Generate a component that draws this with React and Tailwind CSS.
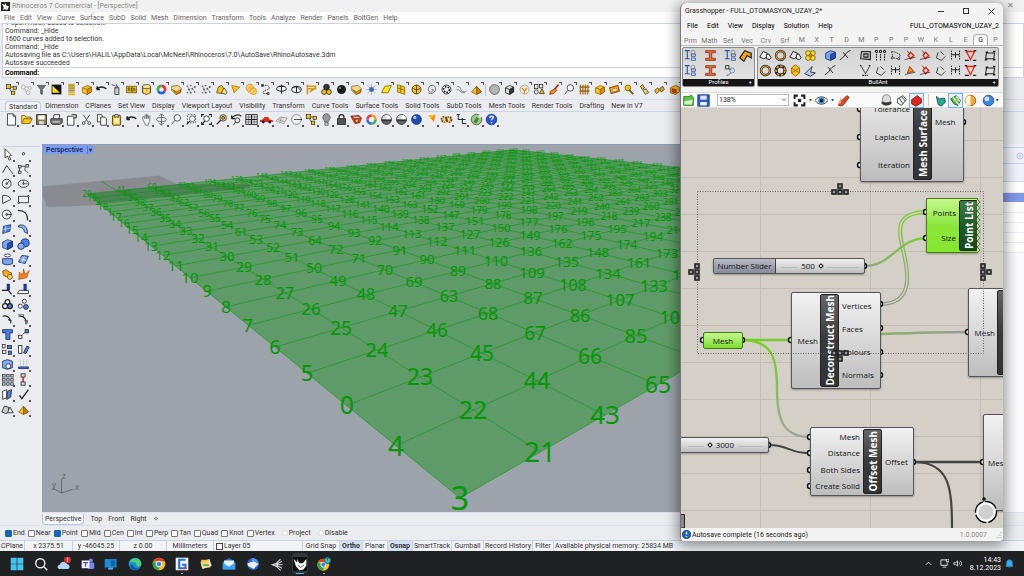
import { useState } from "react";

const Y = "#f6c21c";
const B = "#4d7fdc";
const K = "#222";

// Small drawings shared by all the toolbars, every one on a 16 x 16 board
const GLYPHS = {
    nodes: <g stroke={K} strokeWidth=".8"><path d="M5 5h6M5 6l4 7" fill="none" /><rect x="2" y="2" width="5" height="5" fill={Y} /><rect x="10" y="4" width="4" height="4" fill={Y} /><rect x="8" y="10" width="4" height="4" fill={Y} /></g>,
    nodesGrey: <g stroke="#aaa" strokeWidth="1"><path d="M5 5h6M5 6l4 7" fill="none" /><circle cx="4" cy="5" r="2.5" fill="#eee" /><circle cx="12" cy="6" r="2" fill="#eee" /><circle cx="10" cy="12" r="2.5" fill="#eee" /></g>,
    filter: <path d="M3 3h10l-4 5v6l-2-1V8z" fill="#777" stroke="#333" strokeWidth=".8" />,
    contrast: <g><rect x="2" y="2" width="12" height="12" fill="#111" /><path d="M3 13V4l9 9z" fill="#ffe21f" transform="translate(0 -1)" /></g>,
    list: <g><path d="M4 2h8M4 5h8M4 8h8M4 11h8M4 14h8" stroke="#e0b21b" strokeWidth="2" /><path d="M4 3.500h8M4 6.500h8M4 9.500h8" stroke="#555" strokeWidth=".8" /></g>,
    box: <g stroke="#7c5600" strokeWidth=".8"><path d="M3 6l6-3 5 2v6l-5 3-6-2z" fill={Y} /><path d="M3 6l6 2 5-3M9 8v6" fill="none" /><path d="M9 8l5-3v6l-5 3z" fill="#e08e12" /></g>,
    cyl: <g stroke={K} strokeWidth=".9"><path d="M3 5v7l5 2 5-2V5z" fill={Y} /><ellipse cx="8" cy="4.500" rx="5" ry="2.500" fill="#ffe98a" /><path d="M6 7v6M10 7v6" stroke="#fff" /></g>,
    arc: <path d="M2 8c3-4 8-4 12-1M2 8l1-4M2 8l4 0" fill="none" stroke={K} strokeWidth="1.700" />,
    spray: <g stroke={K} strokeWidth=".9"><rect x="6" y="6" width="5" height="8" fill="#ccc" /><path d="M7 6l1-4 2 4M2 2l4 1" fill="none" /></g>,
    tag: <g><rect x="2" y="4" width="12" height="8" fill={Y} stroke="#6d5200" /><path d="M4 10V6h2v4M8 6v4h2V6zM12 6v4" stroke={K} fill="none" strokeWidth=".8" /></g>,
    wheel: <g fill="none" strokeWidth="3.500"><path d="M8 3.500a4.500 4.500 0 0 1 4 6.500" stroke="#e33" /><path d="M12 10a4.500 4.500 0 0 1-8 0" stroke="#2c62e0" /><path d="M4 10a4.500 4.500 0 0 1 4-6.500" stroke="#36b54a" /></g>,
    slab: <g stroke="#6d4a00" strokeWidth=".8"><path d="M2 4l8-1 4 4-1 5-6 2-5-5z" fill="#f2d98c" /><path d="M3 8l5 3 5-3v3l-5 3z" fill="#f08a1a" /></g>,
    speck: <g fill="#555"><circle cx="3" cy="4" r="1" /><circle cx="7" cy="3" r="1" /><circle cx="12" cy="5" r="1.200" /><circle cx="5" cy="8" r="1.200" /><circle cx="9" cy="7" r="1.200" /><circle cx="12" cy="11" r="1" /><circle cx="7" cy="12" r="1.200" /><circle cx="3" cy="12" r="1" /><path d="M3 4l4 8M9 7l3 4" stroke="#777" strokeWidth=".7" /></g>,
    shapes: <g stroke={K} strokeWidth=".8"><path d="M2 12l2-7 4-2 3 4-2 6z" fill={Y} /><path d="M8 12l3-6 4 5-2 3z" fill="#f0e090" /></g>,
    fan: <path d="M2 3l10 2-7 7z" fill={Y} stroke="#8a6a10" strokeWidth=".8" />,
    hatch: <g stroke="#e5a423" strokeWidth="1.300" fill="none"><circle cx="6" cy="6" r="4.500" fill="#fbd98b" /><circle cx="10" cy="10" r="4" fill="#fbd98b" /><path d="M3 8l5-5M4 12l7-7M8 13l5-5" /></g>,
    curve: <g fill="none" stroke={K} strokeWidth="1"><path d="M3 3c8-1 9 2 8 4S2 9 4 13l5 0" strokeDasharray="2 1" /><rect x="2" y="2" width="2" height="2" fill="#fff" /><rect x="9" y="12" width="2" height="2" fill="#fff" /></g>,
    loop: <g fill="none" stroke={K} strokeWidth="1.200"><ellipse cx="8" cy="7" rx="6" ry="3" /><path d="M8 2v11M5 4h6" /></g>,
    loop2: <g fill="none" stroke={K} strokeWidth="1.200"><ellipse cx="8" cy="8" rx="6" ry="4" /><path d="M3 6c5-3 8 0 10 3M8 4v8" /></g>,
    plane: <path d="M3 2v12M3 4h10v3H3M6 11l7-5" fill="none" stroke="#d79a12" strokeWidth="2" />,
    balls: <g stroke={K}><circle cx="8" cy="5" r="3.500" fill="#333" /><circle cx="5" cy="11" r="3" fill={Y} /><circle cx="11" cy="11" r="3" fill={Y} /></g>,
    ballDark: <g><circle cx="8" cy="8" r="5.500" fill="#1a1a1a" /><circle cx="6" cy="6" r="1.500" fill="#777" /></g>,
    burst: <g><path d="M8 1v14M1 8h14M3 3l10 10M13 3L3 13" stroke="#9db7dd" strokeWidth="1" /><circle cx="8" cy="8" r="3" fill="#3767b5" /></g>,
    sheet: <path d="M2 12l4-8 8-1-4 9z" fill="#ffe21f" stroke="#7a6500" strokeWidth="1" />,
    panel: <g stroke="#7a6500" strokeWidth=".9"><path d="M3 2l9 3v9l-9-3z" fill={Y} /><path d="M3 6l9 3M7 3v9" fill="none" /></g>,
    gold: <g stroke={K} strokeWidth=".9"><circle cx="8" cy="8" r="5.500" fill={Y} /><path d="M3 6c4 3 7 3 10 0M8 3v10" fill="none" /></g>,
    spiral: <path d="M8 8c2-2 3 2 0 3S3 9 5 5s9-2 8 3-6 6-9 4" fill="none" stroke="#555" strokeWidth="1" />,
    gear: <g fill="none" stroke={K}><circle cx="8" cy="8" r="5.500" strokeWidth="1" /><circle cx="8" cy="8" r="3.500" strokeDasharray="2 1.500" strokeWidth="2" /></g>,
    squiggle: <path d="M2 5c3-2 5 1 5 3s4 4 7 2M2 8c4 0 5 5 10 4" fill="none" stroke="#666" />,
    pyramid: <g stroke="#6d4a00" strokeWidth=".8"><path d="M2 11l6-7 6 7-6 3z" fill={Y} /><path d="M8 4v10l6-3z" fill="#c77d12" /></g>,
    ballGrey: <circle cx="8" cy="8" r="6" fill="#b5b5b5" stroke="#555" />,
    cube: <g stroke={K}><path d="M3 6l5-3 5 2v6l-5 3-5-2z" fill="#ddd" /><path d="M8 8l5-3v6l-5 3z" fill="#333" /><path d="M3 6l5 2" /></g>,
    knot: <g stroke="#999"><circle cx="8" cy="8" r="5.500" fill="#f3ead0" /><path d="M5 6l3 4 3-4M8 10v3" stroke="#d08a16" strokeWidth="1.500" fill="none" /></g>,
    digits: <g stroke={K} strokeWidth=".9" fill="#eee"><rect x="2" y="2" width="4" height="5" /><rect x="8" y="2" width="4" height="4" /><circle cx="4" cy="11" r="2.500" /><path d="M8 13l3-6 3 6z" fill={Y} /></g>,
    brush: <g><path d="M13 2L8 8" stroke="#a02a1a" strokeWidth="2" /><path d="M9 7l-6 3-1 4 5-1 4-4z" fill="#f08a1a" stroke="#6d2a00" strokeWidth=".8" /></g>,
    lens: <g fill="#f5f5f5" stroke="#555" strokeWidth="1.200"><path d="M6 9l-4 5" /><circle cx="9" cy="6" r="4" /></g>,
    fence: <g stroke="#6b4309" strokeWidth="1"><path d="M2 5h12M2 10h12" strokeWidth="1.500" /><path d="M3 2v12M6 2v12M9 2v12M12 2v12" stroke="#b06c10" strokeWidth="1.600" /></g>,
    frame: <g stroke="#a14b08"><path d="M2 6l10-3 2 7-10 3z" fill={Y} strokeWidth="1.500" /><path d="M5 8l5-2 2 3-5 2z" fill="#eee" strokeWidth=".8" /></g>,
    key: <g stroke="#5c4300" strokeWidth=".8"><circle cx="6" cy="6" r="3.500" fill={Y} /><path d="M8 8l5 5-1 1-5-5z" fill="#8b6a10" /></g>,
    bolt: <g stroke={K} strokeWidth=".8"><path d="M3 4l3-2 2 4-3 2z" fill={Y} /><path d="M6 9l4-2 3 5-4 2z" fill="#e3cf70" /></g>,
    bolts: <g stroke={K} strokeWidth=".8"><path d="M2 9l4-3 2 4-4 3z" fill={Y} /><path d="M8 7l4-3 2 4-4 3z" fill="#e0a020" /></g>,
    redBox: <g stroke="#7a3b00" strokeWidth=".9"><path d="M3 6l6-3 5 2v6l-5 3-6-2z" fill={Y} /><path d="M5 7l5 1v4l-5-1z" fill="#e03a1a" /></g>,
    page: <path d="M3 1h7l3 3v11H3zM10 1v3h3" fill="#fff" stroke={K} strokeWidth="1" />,
    folder: <g stroke="#6b4d05" strokeWidth=".9"><path d="M2 12V3h4l1 2h6v2" fill="#ffd95e" /><path d="M2 13l3-6h10l-3 6z" fill={Y} /></g>,
    disk: <g><rect x="2" y="2" width="12" height="12" fill="#8a8046" stroke={K} /><rect x="4" y="3" width="8" height="5" fill="#fff" /><rect x="5" y="10" width="6" height="4" fill="#d5d5d5" /></g>,
    printer: <g stroke={K}><path d="M4 7l1-5h7l-1 5" fill="#fff" /><path d="M1 7h14v5l-3 2H3l-2-2z" fill="#777" /><path d="M3 11h9" stroke="#fff" /></g>,
    props: <g stroke={K}><path d="M3 4h8v11H3z" fill="#fff" /><path d="M8 2h6v4h-4" fill="#bbb" /></g>,
    cut: <g fill="none" stroke="#444" strokeWidth="1.100"><path d="M4 2l6 9M12 2l-6 9" /><circle cx="4.500" cy="12.500" r="1.700" /><circle cx="11.500" cy="12.500" r="1.700" /></g>,
    copy: <g fill="#fff" stroke={K}><path d="M3 2h5l1 2v7H3z" /><path d="M7 5h5l2 2v8H7z" /></g>,
    paste: <g stroke={K} strokeWidth=".9"><rect x="3" y="3" width="10" height="12" rx="1" fill={Y} /><path d="M5 5h6l-1-3H6z" fill="#ddd" /><rect x="5" y="6" width="6" height="7" fill="#fff0b8" stroke="none" /></g>,
    hand: <path d="M4 9L3 5l1-1 2 3V3l1-1 1 5 0-5 1 0 1 5 1-4 1 1v5l-2 6H7z" fill="#fff" stroke="#555" strokeWidth=".9" />,
    orbit: <g fill="none" stroke="#555"><path d="M8 1v14M5 4l3-3 3 3M5 12l3 3 3-3" /><ellipse cx="8" cy="8" rx="6" ry="2.500" /></g>,
    zoomSel: <g fill="none" stroke={K}><path d="M3 12V2h10v10z" strokeDasharray="2 1.500" strokeWidth=".8" /><circle cx="9" cy="7" r="3.500" fill="#f6f6f6" stroke="#555" /><path d="M6 10l-4 4" strokeWidth="1.500" /></g>,
    zoomExt: <g fill="none" stroke={K}><path d="M2 5V2h3M11 2h3v3M14 11v3h-3M5 14H2v-3" strokeWidth="1.300" /><circle cx="8" cy="7" r="3.500" fill="#f6f6f6" /><path d="M6 10l-3 3" strokeWidth="1.500" /></g>,
    zoomY: <g stroke={K}><circle cx="10" cy="6" r="4" fill="#ffe9a0" /><circle cx="10" cy="6" r="1.800" fill={Y} /><path d="M7 9l-5 5" strokeWidth="1.600" /></g>,
    undoView: <g fill="none" stroke={K}><path d="M2 7c2-5 9-6 12-3M2 7l0-4M2 7h4" strokeWidth="1.500" /><circle cx="9" cy="9" r="3" /><path d="M7 11l-3 4" /></g>,
    grid4: <g fill="#ddd" stroke={K} strokeWidth="1"><rect x="1" y="2" width="14" height="12" /><path d="M8 2v12M1 8h14" strokeWidth="1.500" /><path d="M4.500 2v12M11.500 2v12M1 5h14M1 11h14" strokeWidth=".5" /></g>,
    car: <g><path d="M0 9l3-1 3-3h4l2 3 4 1v2H0z" fill="#e02a1f" /><circle cx="4" cy="11" r="1.800" fill={K} /><circle cx="12" cy="11" r="1.800" fill={K} /></g>,
    mesh: <g stroke="#888" fill="#ddd" strokeWidth=".8"><path d="M1 10l5-5 9 1-4 7z" /><path d="M4 8l8 3M8 5l-2 7" /></g>,
    dial: <g fill="#f2f2f2" stroke="#777"><circle cx="8" cy="8" r="6" /><path d="M8 8h7M8 8h-3" stroke={K} /></g>,
    bulb: <g stroke="#555"><path d="M5 9C1 4 6 1 8 1s7 3 3 8l-1 2H6z" fill="#9a9a9a" /><path d="M6 12h4v3H6z" fill="#ddd" /></g>,
    lock: <g stroke={K}><path d="M5 8V5c0-4 6-4 6 0v3" fill="none" strokeWidth="1.500" /><rect x="3" y="7" width="10" height="7" fill="#555" /></g>,
    shade: <g stroke="#6b1b10" strokeWidth=".8"><path d="M1 4l10-1 3 3-2 6-6 1z" fill="#e23a2a" /><path d="M2 4l9 0 2 2-7 1z" fill="#f6d7b0" /><path d="M6 8l5-1-1 4-3 1z" fill={Y} /></g>,
    ring: <g fill="none" strokeWidth="3"><path d="M8 3a5 5 0 0 1 5 5" stroke="#f5a11a" /><path d="M13 8a5 5 0 0 1-5 5" stroke="#2db24a" /><path d="M8 13a5 5 0 0 1-5-5" stroke="#2c62e0" /><path d="M3 8a5 5 0 0 1 5-5" stroke="#e3333a" /></g>,
    ballHalf: <g><circle cx="8" cy="8" r="6" fill="#666" stroke={K} /><path d="M2.500 8a5.500 5.500 0 0 1 11 0z" fill="#ddd" /><path d="M8 2v6h5.500A6 6 0 0 0 8 2z" fill="#fff" /><path d="M2 8h12v2H2z" fill="#333" /></g>,
    ballBlue: <g><circle cx="8" cy="8" r="6" fill="#1f4fae" stroke="#12265a" /><circle cx="6" cy="5.500" r="2" fill="#a9c6ff" /></g>,
    cone: <g><path d="M4 3l9-1-2 9z" fill="#f08a1a" /><path d="M4 3l9-1-5 4z" fill={Y} /></g>,
    gears: <g fill="none" stroke="#6b3e10"><circle cx="5" cy="8" r="3" strokeWidth="2.500" strokeDasharray="2 1" /><circle cx="11" cy="8" r="3" strokeWidth="2.500" strokeDasharray="2 1" /><circle cx="8" cy="8" r="4" stroke={Y} /></g>,
    steps: <path d="M2 2h4M4 2v6h5M9 6v7h5M9 8h4" fill="none" stroke={K} strokeWidth="1.200" />,
    hopper: <g><circle cx="8" cy="8" r="6.500" fill="#9acb86" stroke="#4c4c4c" /><path d="M4 11l4-6 3 2-3 6z" fill="#4e7f3e" /><circle cx="12" cy="4" r="2" fill="#d8ead0" /></g>,
    help: <g><circle cx="8" cy="8" r="6.500" fill="#2c55c8" stroke="#17317e" /><path d="M6 6c0-3 5-3 4 0-1 1-2 1-2 3M8 11v1.500" stroke="#fff" strokeWidth="1.600" fill="none" /></g>,
    // modelling palette on the left
    cursor: <path d="M5 1v11l3-2 2 5 2-1-2-4 3-1z" fill="#fff" stroke={K} />,
    point: <circle cx="8" cy="7" r="1.500" fill="#fff" stroke={K} />,
    polyline: <path d="M2 12L7 3l8 11" fill="none" stroke={K} />,
    ctrlPts: <g fill="#fff" stroke={K} strokeWidth=".9"><path d="M3 12V4h8c-4 6 2 7 3 8" fill="none" /><rect x="2" y="10" width="3" height="3" /><rect x="2" y="3" width="3" height="3" /><rect x="11" y="2" width="3" height="3" /></g>,
    circle: <g fill="none" stroke={K}><circle cx="7" cy="7" r="5.500" /><path d="M7 7l4-4" /><circle cx="7" cy="7" r="1" /></g>,
    ellipse: <g fill="none" stroke={K}><ellipse cx="8" cy="7" rx="6.500" ry="4.500" /><path d="M8 7h6M8 3v4" strokeWidth=".7" /><circle cx="8" cy="7" r="1" /></g>,
    arcTool: <path d="M2 3h4c4 1 6 4 6 5L2 13z" fill="none" stroke={K} />,
    rect: <g fill="none" stroke={K}><rect x="2" y="4" width="12" height="8" /><circle cx="2" cy="12" r="1" fill="#fff" /><circle cx="14" cy="4" r="1" fill="#fff" /></g>,
    polygon: <g fill="none" stroke={K}><circle cx="7" cy="8" r="5.500" /><circle cx="7" cy="8" r="1.200" /><path d="M7 8h6" /></g>,
    blend: <path d="M1 3c7 0 12 2 12 12" fill="none" stroke={K} strokeWidth="1.600" />,
    surface: <g stroke="#1a2f66" strokeWidth=".9"><path d="M3 4l9-2-1 8-9 3z" fill={B} /><path d="M6 3l-1 9M3 8l9-2" stroke="#fff" strokeWidth=".7" /></g>,
    sweep: <path d="M2 3c6-2 11 1 11 10l-4-2c0-4-3-6-7-6z" fill="#8eb1f0" stroke="#1a2f66" />,
    boxBlue: <g stroke="#14285c" strokeWidth=".9"><path d="M2 5l6-3 6 2v7l-6 3-6-2z" fill="#7da5ef" /><path d="M8 7l6-3v7l-6 3z" fill="#2552ae" /></g>,
    spheres: <g stroke="#14285c"><circle cx="10" cy="6" r="5" fill={B} /><circle cx="5" cy="10" r="4" fill="#86abef" /></g>,
    cylBlue: <g stroke="#14285c"><ellipse cx="8" cy="3" rx="4" ry="1.800" fill="#fff" /><path d="M2 7h12v6c-3 2-9 2-12 0z" fill="#7da5ef" /></g>,
    sheetBlue: <g stroke="#14285c"><path d="M2 11l4-8 8 1-4 9z" fill="#7da5ef" /><path d="M4 7l8 2M9 4l-3 8" stroke="#fff" strokeWidth=".8" /></g>,
    puzzle: <g stroke="#6b4309"><path d="M2 4l4-2 4 3 3 1-1 4-5 1-4-2z" fill="#f3ab22" /><circle cx="11" cy="11" r="3" fill="#ffd95e" /></g>,
    explode: <path d="M2 14l1-9 4 4 1-8 2 7 5-5-3 9z" fill="#f08a1a" stroke="#9b3b00" strokeWidth=".7" />,
    trim: <g stroke={K}><path d="M1 9h8l4 5" fill="none" strokeWidth="1.400" /><path d="M7 1h4v8H7z" fill="#1d3a8a" stroke="none" /></g>,
    split: <g stroke={K}><path d="M1 12l2-3h11v4H1z" fill="#fff" /><path d="M8 1h4v9H8z" fill="#1d3a8a" stroke="none" /></g>,
    group: <g stroke={K} strokeWidth="1.500"><circle cx="8" cy="5" r="3" fill="#fff" /><circle cx="5" cy="10" r="3" fill="#fff" /><circle cx="11" cy="10" r="3" fill={B} /></g>,
    ungroup: <g stroke={K}><circle cx="9" cy="4" r="2.500" fill="#fff" /><circle cx="4" cy="10" r="2.500" fill="#fff" /><circle cx="11" cy="11" r="3" fill={B} /></g>,
    edit1: <path d="M2 4c7-2 11 4 10 9M9 8l4 2" fill="none" stroke={K} strokeWidth="1.400" />,
    edit2: <g fill="none" stroke={K}><path d="M2 4c7-1 10 4 9 10" strokeWidth="1.400" /><path d="M1 2h7v3M9 9h4v4" strokeWidth=".7" /></g>,
    text: <path d="M2 2h12v4h-3v8H6V6H2z" fill={B} stroke="#14285c" />,
    move: <g stroke={K}><rect x="2" y="9" width="4" height="4" fill="#fff" /><path d="M7 8l3-3" /><rect x="10" y="2" width="4" height="4" fill={B} /></g>,
    align: <g stroke={K} strokeWidth=".9"><rect x="2" y="2" width="3" height="4" fill="#fff" /><rect x="8" y="3" width="5" height="4" fill={B} /><rect x="2" y="9" width="4" height="4" fill="#fff" /><rect x="9" y="10" width="4" height="4" fill={B} /></g>,
    rotate: <g stroke={K}><rect x="2" y="3" width="4" height="10" fill="#fff" /><path d="M8 12l4-8 3 1-4 8z" fill={B} /></g>,
    solid: <g stroke="#14285c"><path d="M2 4l6-2 6 2v8l-6 2-6-2z" fill="#86abef" /><circle cx="9" cy="10" r="3" fill="#fff" /></g>,
    project: <g stroke="#8aa"><path d="M4 2v7M8 2v7M12 2v7" strokeDasharray="1 1" /><path d="M2 11h12v2H2z" fill={B} stroke="#14285c" /></g>,
    array: <g fill="#c7d7f7" stroke={K} strokeWidth=".9"><rect x="2" y="2" width="3" height="3" /><rect x="7" y="2" width="3" height="3" /><rect x="12" y="2" width="3" height="3" /><rect x="2" y="7" width="3" height="3" /><rect x="7" y="7" width="3" height="3" /><rect x="12" y="7" width="3" height="3" /><rect x="2" y="12" width="3" height="3" /><rect x="7" y="12" width="3" height="3" /><rect x="12" y="12" width="3" height="3" /></g>,
    dim: <g stroke={K} fill="#ddd"><rect x="5" y="1" width="5" height="4" /><rect x="5" y="11" width="5" height="4" /><path d="M7.500 5v6" stroke="#d22" strokeWidth="2" /></g>,
    check: <path d="M3 9l3 4L14 2" fill="none" stroke={K} strokeWidth="1.700" />,
    twist: <g stroke={K}><path d="M2 4l5-2v10l-5 2z" fill="#fff" /><path d="M8 4l5-2-1 9-5 3z" fill={B} /></g>,
    solids: <g stroke={K}><path d="M1 11l3-7 5 1 1 6-4 2z" fill="#ccc" /><path d="M8 12l3-7 4 7z" fill="#eee" /></g>,
    // grasshopper ribbon
    beamBlue: <g fill="none" stroke="#2856a8" strokeWidth="1.400"><path d="M1 2h6M4 2v10M1 12h6" /><path d="M9 6h5v3H9zM9 11h5v3H9z" strokeWidth="1" /><circle cx="11" cy="4" r="2.500" stroke="#777" strokeWidth=".8" /></g>,
    beamRed: <path d="M2 2h12v2.500H9.500v7H14V14H2v-2.500h4.500v-7H2z" fill="#ee6a3a" stroke="#7c2a10" strokeWidth=".9" />,
    chip: <g stroke={K} fill="none"><rect x="2" y="2" width="4" height="4" /><circle cx="10" cy="8" r="3" stroke={B} /><path d="M6 6l3 1M3 14c3 0 4-1 5-3" strokeWidth=".7" /></g>,
    flame: <path d="M1 11l6-9 8 3v6l-5-3-4 7z" fill="#f5a11a" stroke={K} strokeWidth="1.500" />,
    rock: <g fill="#eee" stroke={K} strokeWidth="1.200"><path d="M1 10l4-7 5 2 1 4-5 3z" /><path d="M9 7l3-1 3 5-2 2-4-1z" /></g>,
    torus: <g fill="none"><circle cx="8" cy="8" r="5.500" stroke={K} strokeWidth="3" /><circle cx="8" cy="8" r="5.500" stroke="#e9a23b" strokeWidth="1.400" /></g>,
    torusHex: <g fill="none"><circle cx="8" cy="8" r="5.500" stroke={K} strokeWidth="4" /><circle cx="8" cy="8" r="5.500" stroke="#e9a23b" strokeWidth="2" strokeDasharray="3 2" /></g>,
    flower: <g fill="#ffe21f" stroke="#7a5600"><circle cx="5" cy="5" r="3" /><circle cx="11" cy="5" r="3" /><circle cx="5" cy="11" r="3" /><circle cx="11" cy="11" r="3" /><circle cx="8" cy="8" r="2" fill="#f08a1a" /></g>,
    egg: <path d="M8 1l5 4v6l-5 4-5-4V5zM3 5l10 6M13 5L3 11" fill={Y} stroke="#9b5b00" />,
    sail: <path d="M1 12l9-9-2 7 6 1-6 4z" fill="#b9cdf3" stroke={K} />,
    slope: <path d="M1 13C6 12 8 3 14 2M5 4l6 7" fill="none" stroke={K} strokeWidth="1.200" />,
    quad: <path d="M3 3h11v10l-12-1zM6 6l5 0 0 4-5 0z" fill="#bbb" stroke={K} strokeWidth="1.300" />,
    bars: <g stroke={K} strokeWidth="1.300" fill="#fff"><path d="M3 3v11M8 3v11M13 3v11" strokeDasharray="2 1" /><circle cx="3" cy="3" r="1.300" /><circle cx="8" cy="3" r="1.300" /><circle cx="13" cy="3" r="1.300" /></g>,
    ptsPath: <g stroke={K} fill="#fff"><path d="M3 3l2 8 7 1 2-5-6-3z" fill="none" strokeDasharray="2 1" /><circle cx="4" cy="11" r="1.300" /><circle cx="12" cy="12" r="1.300" /></g>,
    redNode: <g fill="none" stroke="#e02a1f" strokeWidth="1.800"><path d="M8 4l4 4-4 4-3-4z" /><path d="M1 13l13-3M4 2l3 4" stroke={K} strokeWidth=".9" /></g>,
    yellowNode: <g><path d="M7 3l5 6-8 2z" fill="#f08a1a" stroke="#9b3b00" /><path d="M1 13l13-3" stroke={K} strokeWidth=".9" /></g>,
    hex: <path d="M5 4l-2 7 6 3 5-5M8 3l4 4" fill="none" stroke={K} />,
    ladder: <g stroke={K} strokeWidth="1.200" fill="none"><path d="M3 2v12M13 2v12" strokeDasharray="2 1" /><path d="M3 7h10M8 4v7" /></g>,
    vRed: <g fill="none"><path d="M3 3l5 10 5-10z" stroke="#e02a1f" strokeWidth="1.700" /><path d="M1 2h3M12 2h3M1 14h5M11 14h4" stroke={K} strokeWidth="1.300" /></g>,
    vGrey: <g fill="none" stroke={K}><path d="M3 3l5 9 5-9" /><path d="M1 2h3M12 2h3M4 14h7" strokeWidth="1.500" strokeDasharray="2 1" /></g>,
    road: <g fill="none" stroke={K}><path d="M3 5h10l-1 7H2z" strokeWidth="1.300" /><path d="M2 4h3M11 3h3M1 13h3M11 13h3" strokeWidth="2" /></g>,
};

const Glyph = ({ name, className = "size-[13px]" }) => (
    <svg viewBox="0 0 16 16" className={className} aria-hidden="true">
        {GLYPHS[name]}
    </svg>
);

const ToolButton = ({ name, mark }) => (
    <button type="button" aria-label={name} className="relative flex size-[15px] shrink-0 items-center justify-center">
        <Glyph name={name} />
        {mark === "top" && <span className="absolute top-0 right-0 size-[3px] border-t border-r border-[#555]" />}
        {mark === "bottom" && <span className="absolute right-0 bottom-0 size-[2px] bg-[#555]" />}
    </button>
);

const RHINO_MENU = ["File", "Edit", "View", "Curve", "Surface", "SubD", "Solid", "Mesh", "Dimension", "Transform", "Tools", "Analyze", "Render", "Panels", "BoltGen", "Help"];

const HISTORY = [
    "1 open mesh added to selection.",
    "Command: _Hide",
    "1600 curves added to selection.",
    "Command: _Hide",
    "Autosaving file as C:\\Users\\HALIL\\AppData\\Local\\McNeel\\Rhinoceros\\7.0\\AutoSave\\RhinoAutosave.3dm",
    "Autosave succeeded",
];

const TOP_TOOLS = [
    "nodes", "nodesGrey", "filter", "contrast", "list", "box", "arc", "spray", "tag", "cyl", "wheel", "slab", "speck", "speck", "shapes", "fan",
    "hatch", "curve", "loop", "loop2", "plane", "balls", "ballDark", "slab", "burst", "sheet", "panel", "gold", "spiral", "gear", "squiggle", "pyramid",
];

const TOP_TOOLS_2 = ["ballGrey", "cube", "knot", "digits", "brush", "lens", "fence", "box", "frame", "key", "bolt", "bolts", "redBox"];

const TOOL_TABS = ["Standard", "Dimension", "CPlanes", "Set View", "Display", "Viewport Layout", "Visibility", "Transform", "Curve Tools", "Surface Tools", "Solid Tools", "SubD Tools", "Mesh Tools", "Render Tools", "Drafting", "New in V7"];

const STANDARD_TOOLS = [
    "page", "folder", "disk", "printer", "props", "cut", "copy", "paste", "arc", "hand", "orbit", "lens", "zoomSel", "zoomExt", "zoomY", "undoView",
    "grid4", "car", "mesh", "dial", "nodes", "bulb", "lock", "shade", "ring", "ballHalf", "ballHalf", "ballBlue", "cone", "gears", "steps", "hopper", "help",
];

const SIDE_TOOLS = [
    "cursor", "point", "polyline", "ctrlPts", "circle", "ellipse", "arcTool", "rect", "polygon", "blend", "surface", "sweep",
    "boxBlue", "spheres", "cylBlue", "sheetBlue", "puzzle", "explode", "trim", "split", "group", "ungroup", "edit1", "edit2",
    "text", "move", "align", "rotate", "solid", "project", "array", "dim", "twist", "check", "solids", "pyramid",
];

const SNAPS = ["End", "Near", "Point", "Mid", "Cen", "Int", "Perp", "Tan", "Quad", "Knot", "Vertex"];

const STATUS = [
    { text: "CPlane", width: "w-[25px]" },
    { text: "x 2375.51", width: "w-[48px]" },
    { text: "y -46045.25", width: "w-[47px]" },
    { text: "z 0.00", width: "w-[47px]" },
    { text: "Millimeters", width: "w-[47px]" },
    { text: "Layer 05", width: "w-[89px]", swatch: true },
    { text: "Grid Snap", width: "w-[37px]" },
    { text: "Ortho", width: "w-[23px]", on: true },
    { text: "Planar", width: "w-[25px]" },
    { text: "Osnap", width: "w-[25px]", on: true },
    { text: "SmartTrack", width: "w-[39px]" },
    { text: "Gumball", width: "w-[32px]" },
    { text: "Record History", width: "w-[49px]" },
    { text: "Filter", width: "w-[21px]" },
];

const range = (from, to) => Array.from({ length: to - from + 1 }, (_, k) => from + k);

// Vertex numbers, one list for each row of the mesh
const ROWS = [
    [3, 4, 0, ...range(5, 17), 1, 18, 2, 19, 20],
    range(21, 41),
    [...range(43, 53), 61, 54, 55, 56, 57, 62, 42, 58, 59, 60],
    [65, 66, 67, 68, 63, 69, 70, 71, 72, 64, ...range(73, 83)],
    range(84, 104),
    range(105, 125),
    [...range(131, 136), 126, 127, ...range(137, 141), 128, 129, 130, ...range(142, 146)],
    [158, 159, 160, 161, 148, 162, 149, 150, 151, 147, 152, 163, 153, 154, 155, 156, 164, 157, 165, 166, 167],
    [...range(170, 179), 169, ...range(180, 187), 168, 188],
    [...range(190, 209), 189],
    range(212, 232),
    range(233, 253),
    ...range(0, 8).map((k) => range(254 + k * 21, 274 + k * 21)),
];

// Perspective projection of mesh vertex (i, j) on the viewport
const project = (i, j) => {
    const w = 1 + 0.147 * i + 0.1235 * j;
    return { x: (460 - 5.8 * i + 147.2 * j) / w, y: (498 + 13.3 * i + 9.8 * j) / w, w };
};

const line = (a, b) => `M${a.x.toFixed(1)} ${a.y.toFixed(1)}L${b.x.toFixed(1)} ${b.y.toFixed(1)}`;

const MESH_LINES = range(0, 20)
    .map((k) => line(project(k, 0), project(k, 20)) + line(project(0, k), project(20, k)))
    .join("");

const MESH_OUTLINE = [project(0, 0), project(20, 0), project(20, 20), project(0, 20)].map((p) => `${p.x},${p.y}`).join(" ");

const Viewport = () => (
    <section className="relative min-w-0 flex-1 overflow-hidden border-t border-l border-[#8f9cb5] bg-[#9ca3ab]">
        <svg className="absolute inset-0 size-full font-['Noto_Sans','Open_Sans',sans-serif]">
            <g transform="translate(-43 -145)">
                <polygon points="40,187 160,176 184,188 250,200 47,207" fill="#898b90" />
                <path d="M40 187L160 176l24 12" fill="none" stroke="#85878c" strokeWidth=".6" />
                <polygon points={MESH_OUTLINE} fill="#5f9b68" />
                <polygon points="88,194 180,184 250,184 250,188 100,204" fill="#4d8456" />
                <path d={MESH_LINES} fill="none" stroke="#149419" strokeWidth=".6" />
                <path d="M101 181l16 10" stroke="#149419" strokeWidth=".6" />
                <g fill="#069606" textAnchor="middle">
                    {ROWS.flatMap((row, j) =>
                        row.map((n, i) => {
                            const p = project(i, j);
                            const size = Math.max(5, Math.round(32 / p.w));
                            return (
                                <text key={n + "-" + j} x={Math.round(p.x)} y={Math.round(p.y + size * 0.36)} fontSize={size}>
                                    {n}
                                </text>
                            );
                        })
                    )}
                </g>
                <g fill="none" stroke="#62676d" strokeWidth=".9">
                    <path d="M61.500 493v-14M61.500 493l12-4M61.500 493l-9-5" />
                </g>
                <g fill="#62676d" fontSize="8">
                    <text x="62" y="479">z</text>
                    <text x="52" y="488">y</text>
                    <text x="75" y="490">x</text>
                </g>
            </g>
        </svg>
        <button type="button" className="relative flex h-[9px] items-center gap-1 bg-[#7e9cf3] pr-px pl-[3px] text-[7px] leading-2 font-semibold text-[#1c2c5c]">
            Perspective
            <span className="border-l border-[#5b76c8] pl-px text-[6px]">▾</span>
        </button>
    </section>
);

const LayersPanel = () => (
    <aside className="flex w-[120px] shrink-0 flex-col bg-[#f0f2fa]">
        <div className="h-1 border-b border-[#c8d3ee]" />
        <div className="flex h-4 items-center justify-end border-b border-[#c8d3ee]">
            <svg viewBox="0 0 8 8" className="size-2 text-[#b6c4e6]" aria-hidden="true">
                <circle cx="4" cy="4" r="3" fill="none" stroke="currentColor" />
                <circle cx="4" cy="4" r="1" fill="none" stroke="currentColor" />
            </svg>
        </div>
        <div className="h-[18px] border-b border-[#d3dbef]" />
        <table className="w-full border-collapse bg-white">
            <tbody>
                {range(0, 6).map((r) => (
                    <tr key={r} className={r === 1 ? "h-[10px] bg-[#8297e6]" : "h-[10px] border-b border-[#eceef6]"}>
                        <td className="p-0" />
                    </tr>
                ))}
            </tbody>
        </table>
        <div className="flex-1 bg-[#fbfbfd]" />
    </aside>
);

const SnapBox = ({ label, defaultChecked }) => (
    <label className="flex items-center gap-px">
        <input
            type="checkbox"
            defaultChecked={defaultChecked}
            className="size-[7px] appearance-none rounded-[1px] border border-[#777] bg-white checked:border-[#1765b8] checked:bg-[#1765b8]"
        />
        {label}
    </label>
);

const RhinoWindow = () => {
    const [tab, setTab] = useState("Standard");

    return (
        <div className="flex min-h-0 flex-1 flex-col bg-[#ebecf0] text-[7px] leading-2 text-[#333]">
            <header className="flex h-3 shrink-0 items-center bg-[#f1f1f1] pl-px text-[#8a8a8a]">
                <svg viewBox="0 0 10 10" className="mr-[2px] size-[9px]" aria-hidden="true">
                    <rect width="10" height="10" fill="#222" />
                    <path d="M1 2l3 1 1-2 1 3 3 1-2 4-3-1-2 1 1-3z" fill="#eee" />
                </svg>
                <h1 className="flex-1">Rhinoceros 7 Commercial - [Perspective]</h1>
                <button type="button" aria-label="Close" className="pr-[10px] text-[8px]">✕</button>
            </header>
            <nav className="flex h-[11px] shrink-0 items-center gap-[5px] bg-[#fcfcfc] pl-1 text-[#666]">
                {RHINO_MENU.map((item) => (
                    <button key={item} type="button">{item}</button>
                ))}
            </nav>
            <div className="ml-[2px] flex h-[45px] shrink-0 flex-col justify-end overflow-hidden border border-[#cdd2de] bg-white pl-[2px] text-[#333]">
                {HISTORY.map((entry, k) => (
                    <p key={k} className="shrink-0 whitespace-nowrap">{entry}</p>
                ))}
            </div>
            <label className="ml-[2px] flex h-[10px] shrink-0 items-center border-x border-b border-[#cdd2de] bg-white pl-[2px] font-bold text-black">
                Command:
                <input type="text" className="min-w-0 flex-1 pl-1 font-normal outline-none" />
            </label>
            <div className="flex shrink-0 items-center border-b border-[#dcdfe8] pt-1 pb-[2px] pl-1">
                {TOP_TOOLS.map((name, k) => (
                    <ToolButton key={k} name={name} mark="top" />
                ))}
                <span className="mr-px ml-px h-3 w-px bg-[#bcc2ce]" />
                {TOP_TOOLS_2.map((name, k) => (
                    <ToolButton key={k} name={name} mark="top" />
                ))}
            </div>
            <div className="mt-[2px] flex h-[10px] shrink-0 items-end gap-px border-b border-[#cbd3e6] pl-[5px]" role="tablist">
                {TOOL_TABS.map((name) => (
                    <button
                        key={name}
                        type="button"
                        role="tab"
                        aria-selected={tab === name}
                        onClick={() => setTab(name)}
                        className={tab === name ? "h-[10px] rounded-t-sm border border-b-0 border-[#c3cce2] bg-[#f3f4f8] px-[3px]" : "h-[10px] px-[3px]"}
                    >
                        {name}
                    </button>
                ))}
            </div>
            <div className="flex h-[32px] shrink-0 items-start pl-1">
                {STANDARD_TOOLS.map((name, k) => (
                    <ToolButton key={k} name={name} mark="bottom" />
                ))}
            </div>
            <div className="flex min-h-0 flex-1">
                <div className="w-[42px] shrink-0 pt-[2px]">
                    <div className="mx-[2px] h-px bg-[#cbd3e6]" />
                    <div className="grid w-[31px] grid-cols-2">
                        {SIDE_TOOLS.map((name) => (
                            <ToolButton key={name} name={name} mark="bottom" />
                        ))}
                    </div>
                </div>
                <Viewport />
                <LayersPanel />
            </div>
            <div className="ml-[42px] flex h-[13px] shrink-0 items-center gap-[6px] border-t border-[#dfe3ec]">
                <button type="button" className="h-[11px] rounded-b-sm border border-t-0 border-[#b9c2d8] bg-[#f4f5f9] px-[2px]">Perspective</button>
                <button type="button">Top</button>
                <button type="button">Front</button>
                <button type="button">Right</button>
                <button type="button" aria-label="New viewport">✧</button>
            </div>
            <div className="flex h-[15px] shrink-0 items-center gap-[3px] border-t border-[#dfe3ec] pl-[5px]">
                {SNAPS.map((name) => (
                    <SnapBox key={name} label={name} defaultChecked={name === "End" || name === "Point"} />
                ))}
                {["Project", "Disable"].map((name) => (
                    <label key={name} className="flex items-center gap-px pl-1">
                        <input type="checkbox" className="size-[6px] appearance-none rounded-full border border-[#d5d8e0] bg-white" />
                        {name}
                    </label>
                ))}
            </div>
            <footer className="flex h-[11px] shrink-0 items-stretch border-t border-[#c9d2e4] bg-[#f2f3f7] whitespace-nowrap">
                {STATUS.map(({ text, width, swatch, on }) => (
                    <div
                        key={text}
                        className={`${width} flex shrink-0 items-center border-r border-[#c9d2e4] ${swatch ? "gap-px pl-[2px]" : "justify-center"} ${on ? "bg-[#d3e0f4] font-bold" : ""}`}
                    >
                        {swatch && <span className="size-[7px] border border-[#444] bg-white" />}
                        {text}
                    </div>
                ))}
                <div className="flex items-center pl-px">Available physical memory: 25834 MB</div>
            </footer>
        </div>
    );
};

const GH_TABS_WIDE = ["Prm", "Math", "Set", "Vec", "Crv", "Srf"];
const GH_TABS = ["M", "X", "T", "D", "M", "P", "P", "P", "W", "K", "L", "E", "G", "P"];

const PROFILE_GROUPS = [
    [["beamBlue"], ["beamBlue"]],
    [["beamRed"], ["beamRed"]],
    [["beamBlue", "flame"], ["chip"]],
];

const BULLANT_GROUPS = [
    [["rock", "torus", "rock", "flower"], ["torus", "torusHex", "egg", "sail"]],
    [["boxBlue", "slope"], ["slope"]],
    [["quad", "bars", "ptsPath", "redNode", "redNode", "hex", "ladder", "vRed"], ["vGrey", "hex", "ladder", "yellowNode", "redNode", "hex", "ladder", "vRed"]],
    [["road"], ["road"]],
];

const RibbonPanel = ({ title, groups, className, gap }) => (
    <div className={`flex flex-col overflow-hidden rounded-[2px] border border-[#8a8a8a] bg-linear-to-b from-[#d2d2d2] to-[#e6e6e6] ${className}`}>
        <div className={`flex h-[31px] items-start justify-start ${gap}`}>
            {groups.map((rows, g) => (
                <div key={g} className="flex flex-col">
                    {rows.map((names, r) => (
                        <div key={r} className="flex">
                            {names.map((name, k) => (
                                <ToolButton key={k} name={name} />
                            ))}
                        </div>
                    ))}
                </div>
            ))}
        </div>
        <div className="relative h-[7px] bg-[#151515] text-center text-[6px] leading-[6px] text-white">
            {title}
            <span className="absolute right-[2px]">+</span>
        </div>
    </div>
);

// Nodes of the definition: left, top, size and the free part inside
const NODE = "absolute rounded-[2px] border border-[#555] bg-linear-to-b from-[#f1f1f1] via-[#d8d8d8] to-[#bdbdbd] shadow-[0_1px_2px_rgba(0,0,0,.3)]";

const NodeName = ({ children, green, low }) => (
    <div className={`flex w-[19px] shrink-0 justify-center overflow-hidden rounded-[2px] border border-[#222] text-[10px] leading-4 font-bold text-white ${low ? "items-end pb-[2px]" : "items-center"} ${green ? "bg-linear-to-b from-[#3f7a4a] via-[#1f5a26] to-[#174a1e]" : "bg-linear-to-b from-[#666] via-[#3a3a3a] to-[#333]"}`}>
        <span className="rotate-180 whitespace-nowrap [writing-mode:vertical-rl]">{children}</span>
    </div>
);

const Ports = ({ names, side }) => (
    <div className={`flex flex-1 flex-col justify-around px-[3px] text-[8px] leading-2 ${side === "in" ? "items-end" : "items-start"}`}>
        {names.map((name) => (
            <span key={name}>{name}</span>
        ))}
    </div>
);

const GRIPS = [
    [860, 109], [860, 137], [860, 165], [963, 122], [926, 212], [926, 238], [864, 266],
    [791, 340], [880, 304], [880, 328], [880, 352], [880, 375], [703, 340], [742, 340],
    [968, 332], [768, 445], [810, 437], [810, 453], [810, 470], [810, 486], [913, 462], [983, 462],
];

const SquareCluster = ({ x, y, turn }) => (
    <g transform={`translate(${x} ${y}) rotate(${turn})`} fill="#999" stroke="#222" strokeWidth="1.600">
        <rect x="-2" y="-6" width="4" height="4" />
        <rect x="-8" y="0" width="4" height="4" />
        <rect x="-2" y="0" width="4" height="4" />
        <rect x="4" y="0" width="4" height="4" />
    </g>
);

const Canvas = () => (
    <main className="relative min-h-0 flex-1 overflow-hidden bg-[#d4d0c8] font-['Open_Sans','Noto_Sans',sans-serif] text-[#111]">
        <svg className="absolute inset-0 size-full" aria-hidden="true">
            <defs>
                <pattern id="grid" width="110" height="37" patternUnits="userSpaceOnUse" x="79" y="32">
                    <path d="M.5 0v37M0 .5h110" stroke="#c3beb4" fill="none" />
                </pattern>
                <linearGradient id="rise" x1="0" y1="1" x2="0" y2="0">
                    <stop offset="0" stopColor="#94998c" />
                    <stop offset="1" stopColor="#78d02c" />
                </linearGradient>
                <linearGradient id="across" x1="0" y1="0" x2="1" y2="0">
                    <stop offset="0" stopColor="#94a584" />
                    <stop offset="1" stopColor="#78d02c" />
                </linearGradient>
                <linearGradient id="fade" x1="742" y1="0" x2="966" y2="0" gradientUnits="userSpaceOnUse">
                    <stop offset="0" stopColor="#74d31d" />
                    <stop offset="1" stopColor="#999a96" />
                </linearGradient>
                <linearGradient id="drop" x1="0" y1="0" x2="0" y2="1">
                    <stop offset="0" stopColor="#74d31d" />
                    <stop offset="1" stopColor="#a0a59a" />
                </linearGradient>
            </defs>
            <rect width="100%" height="100%" fill="url(#grid)" />
            <g transform="translate(-681 -108)" fill="none">
                <path d="M882 304C912 303 909 276 904 254S893 213 926 212" stroke="url(#rise)" strokeWidth="4" />
                <path d="M882 304C912 303 909 276 904 254S893 213 926 212" stroke="#d4d0c8" strokeWidth="1.500" />
                <path d="M866 266C892 265 898 239 926 238" stroke="url(#across)" strokeWidth="2.400" />
                <path d="M742 340L790 340M880 334C910 333 940 332 966 332" stroke="url(#fade)" strokeWidth="2.400" />
                <path d="M742 340C772 340 777 358 777 388S782 437 810 437" stroke="url(#drop)" strokeWidth="2.400" />
                <path d="M769 445C788 445 790 453 808 453" stroke="#444" strokeWidth="2" />
                <path d="M915 462H983" stroke="#444" strokeWidth="2.400" />
                <path d="M915 462C950 463 952 488 952 530" stroke="#444" strokeWidth="2.200" />
                <g fill="#fff" stroke="#111" strokeWidth="1.500">
                    {GRIPS.map(([x, y]) => (
                        <circle key={`${x}-${y}`} cx={x} cy={y} r="2.500" />
                    ))}
                </g>
            </g>
        </svg>

        <div className={`${NODE} top-[-32px] left-[179px] flex h-[106px] w-[104px] p-px`}>
            <div className="flex w-[51px] flex-col items-end justify-end gap-5 pr-[3px] pb-[11px] text-[8px] leading-2">
                <span>Tolerance</span>
                <span>Laplacian</span>
                <span>Iteration</span>
            </div>
            <NodeName low>Mesh Surface</NodeName>
            <div className="pt-[40px] pl-[3px] text-[8px] leading-2">Mesh</div>
        </div>

        <div className="absolute top-[90px] left-[245px] flex h-[55px] w-[52px] rounded-l-[2px] border border-r-0 border-[#4b7a17] bg-linear-to-b from-[#c3f98b] via-[#8ce63b] to-[#86e62f] py-px shadow-[0_1px_2px_rgba(0,0,0,.3)]">
            <Ports names={["Points", "Size"]} side="in" />
            <NodeName green>Point List</NodeName>
            <svg className="absolute top-0 -right-[3px] h-full w-[4px]" aria-hidden="true">
                <path d="M0 0l3 3-3 3 3 3-3 3 3 3-3 3 3 3-3 3 3 3-3 3 3 3-3 3 3 3-3 3 3 3-3 3 3 3-3 3" fill="#d4d0c8" stroke="#3c6e12" strokeWidth=".8" />
            </svg>
        </div>

        <div className={`${NODE} top-[150px] left-[32px] flex h-[16px] w-[152px] text-[8px] leading-[14px]`}>
            <div className="w-[62px] border-r border-[#444] bg-linear-to-b from-[#b9bbc6] to-[#888b99] text-center">Number Slider</div>
            <div className="flex flex-1 items-center justify-center gap-1">
                <span className="h-[3px] w-4 border-b border-[#bbb]" />
                500 <span className="size-1 rotate-45 border border-black bg-white" />
                <span className="h-[3px] w-8 border-b border-[#bbb]" />
            </div>
        </div>

        <div className={`${NODE} top-[184px] left-[110px] flex h-[97px] w-[90px] p-px`}>
            <div className="flex w-[27px] items-center justify-end pr-[2px] text-[8px] leading-2">Mesh</div>
            <NodeName>Deconstruct Mesh</NodeName>
            <Ports names={["Vertices", "Faces", "Colours", "Normals"]} side="out" />
        </div>

        <div className="absolute top-[224px] left-[22px] h-[17px] w-[40px] rounded-[2px] border border-[#3f7a14] bg-linear-to-b from-[#c3f98b] to-[#7fdc2b] text-center text-[8px] leading-[15px]">Mesh</div>

        <div className={`${NODE} top-[180px] left-[287px] flex h-[89px] w-[60px] p-px`}>
            <div className="flex w-[27px] items-center justify-end pr-[2px] text-[8px] leading-2">Mesh</div>
            <NodeName />
        </div>

        <div className={`${NODE} top-[329px] -left-[60px] flex h-[16px] w-[148px] items-center justify-end gap-1 pr-[6px] text-[8px] leading-[14px]`}>
            <span className="h-[3px] w-4 border-b border-[#bbb]" />
            <span className="size-1 rotate-45 border border-black bg-white" /> 3000
            <span className="h-[3px] w-6 border-b border-[#bbb]" />
        </div>

        <div className={`${NODE} top-[319px] left-[129px] flex h-[69px] w-[104px] p-px`}>
            <div className="flex w-[51px]">
                <Ports names={["Mesh", "Distance", "Both Sides", "Create Solid"]} side="in" />
            </div>
            <NodeName>Offset Mesh</NodeName>
            <div className="flex items-center pl-[3px] text-[8px] leading-2">Offset</div>
        </div>

        <div className={`${NODE} top-[306px] left-[302px] flex h-[97px] w-[60px] items-center pl-1 text-[8px] leading-2`}>Mesh</div>

        <svg className="pointer-events-none absolute inset-0 size-full" aria-hidden="true">
            <g transform="translate(-681 -108)">
                <rect x="697.500" y="191.500" width="286" height="162" fill="none" stroke="#666" strokeDasharray="1 1.500" />
                <SquareCluster x={840} y={190} turn={0} />
                <SquareCluster x={695} y={272} turn={-90} />
                <SquareCluster x={985} y={272} turn={90} />
                <SquareCluster x={840} y={355} turn={180} />
                <circle cx="986" cy="512" r="10.500" fill="#e4e4e4" stroke="#111" strokeWidth="1.500" strokeDasharray="14 2" />
                <circle cx="986" cy="512" r="8.500" fill="#d0d0d0" stroke="#fff" strokeWidth="2" />
                <circle cx="984" cy="499" r="1.800" fill="#111" />
                <path d="M681 514.500h3.500V528H681" fill="#888" stroke="#222" />
            </g>
        </svg>
    </main>
);

const GhIcon = ({ children, on }) => (
    <button type="button" className={`flex size-[15px] shrink-0 items-center justify-center ${on ? "border border-[#7db2e8] bg-[#e4f0fb]" : ""}`}>
        <svg viewBox="0 0 16 16" className="size-[13px]" aria-hidden="true">{children}</svg>
    </button>
);

const GrasshopperWindow = () => (
    <div className="absolute top-[3px] right-[21px] bottom-[35px] flex w-[323px] flex-col overflow-hidden rounded-t-md rounded-b border-l border-[#777] bg-[#f3f3f3] text-[7px] leading-2 text-[#222] shadow-[0_3px_14px_2px_rgba(0,0,0,.45)]">
        <header className="flex h-[16px] shrink-0 items-center pl-1">
            <h2 className="flex-1">Grasshopper - FULL_OTOMASYON_UZAY_2*</h2>
            <div className="flex items-center gap-[19px] pr-2">
                <button type="button" aria-label="Minimize" className="h-px w-[6px] bg-[#333]" />
                <button type="button" aria-label="Maximize" className="size-[6px] border border-[#333]" />
                <button type="button" aria-label="Close">
                    <svg viewBox="0 0 7 7" className="size-[7px]"><path d="M.5.5l6 6M6.500.5l-6 6" stroke="#333" /></svg>
                </button>
            </div>
        </header>
        <nav className="flex h-[14px] shrink-0 items-center gap-[9px] pl-[6px] text-black">
            {["File", "Edit", "View", "Display", "Solution", "Help"].map((item) => (
                <button key={item} type="button">{item}</button>
            ))}
            <span className="flex-1 pr-1 text-right">FULL_OTOMASYON_UZAY_2</span>
        </nav>
        <div className="flex h-[12px] shrink-0 items-end text-[#777]">
            {GH_TABS_WIDE.map((name) => (
                <button key={name} type="button" className="w-[19px]">{name}</button>
            ))}
            {GH_TABS.map((name, k) => (
                <button key={k} type="button" className={name === "G" ? "h-[11px] w-[15px] rounded-t border border-b-0 border-[#aaa] bg-white text-[#222]" : "h-[10px] w-[15px]"}>
                    {name}
                </button>
            ))}
        </div>
        <div className="flex h-[47px] shrink-0 items-start gap-[2px] border-t border-[#bbb] px-px pt-px">
            <RibbonPanel title="Profiles" groups={PROFILE_GROUPS} className="w-[73px]" gap="gap-[5px]" />
            <RibbonPanel title="BullAnt" groups={BULLANT_GROUPS} className="mr-[3px] flex-1" gap="gap-[5px]" />
        </div>
        <div className="flex h-[16px] shrink-0 items-center border-y border-[#ddd] bg-[#fafafa]">
            <GhIcon><path d="M2 3h8l1-2 3 3v10H2z" fill="#5cc244" stroke="#2f7d1f" /><path d="M3 9l10-2-1 6H3z" fill="#d6f2cd" /></GhIcon>
            <GhIcon><rect x="1" y="1" width="14" height="14" fill="#2b5fc4" stroke="#173a80" /><rect x="4" y="2" width="8" height="5" fill="#dce7fb" /><rect x="4" y="10" width="8" height="4" fill="#fff" /></GhIcon>
            <div className="relative ml-[6px]">
                <select aria-label="Zoom" className="h-3 w-[72px] appearance-none border border-[#bbb] bg-white pl-px leading-2">
                    <option>138%</option>
                </select>
                <svg viewBox="0 0 6 4" className="pointer-events-none absolute top-1 right-[2px] h-1 w-[6px]" aria-hidden="true">
                    <path d="M1 .5l2 2 2-2" fill="none" stroke="#666" />
                </svg>
            </div>
            <span className="w-[3px]" />
            <GhIcon><path d="M2 6V2h4M10 2h4v4M14 10v4h-4M6 14H2v-4" fill="none" stroke="#222" strokeWidth="2.500" /><rect x="6" y="6" width="4" height="4" fill="#222" /></GhIcon>
            <span className="w-[7px] text-center">▪</span>
            <GhIcon><path d="M0 8c4-6 12-6 16 0-4 6-12 6-16 0z" fill="#fff" stroke="#222" /><circle cx="8" cy="8" r="4" fill="#2f8fbf" /><circle cx="8" cy="8" r="2" fill="#111" /></GhIcon>
            <span className="w-[7px] text-center">▪</span>
            <GhIcon><path d="M2 14c0-4 2-6 4-6l6-6 3 2-6 8c-2 3-5 3-7 2z" fill="#e04a2a" stroke="#7a1b10" /><path d="M5 3L1 13l4-2z" fill="#f6a98a" /></GhIcon>
            <span className="flex-1" />
            <GhIcon><circle cx="8" cy="6" r="5" fill="#ddd" stroke="#777" /><path d="M2 9c3 2 9 2 12 0v3c-3 3-9 3-12 0z" fill="#333" /></GhIcon>
            <GhIcon><path d="M3 6l7-4 4 5-6 7-5-3z" fill="#eee" stroke="#333" /><path d="M5 5l5 7M8 3l5 6" stroke="#333" /></GhIcon>
            <GhIcon on><path d="M2 7l7-5 5 4v5l-7 4-5-3z" fill="#d92a1f" stroke="#6b0d08" /></GhIcon>
            <span className="mx-1 h-3 w-px bg-[#ccc]" />
            <GhIcon><path d="M3 3l4 3 6-1 1 5-5 5-4-2z" fill="#2aa59a" stroke="#0e4b46" /></GhIcon>
            <GhIcon on><path d="M2 6l7-4 5 6-3 6-5-2z" fill="#5eb843" stroke="#1f4d12" /><path d="M5 4l7 9M9 3l4 6" stroke="#fff" strokeWidth="1.500" /></GhIcon>
            <GhIcon><circle cx="8" cy="8" r="6.500" fill="#f3a73b" stroke="#8a4b00" /><path d="M8 1.500a6.500 6.500 0 0 0 0 13z" fill="#fff4d6" /></GhIcon>
            <span className="w-[3px]" />
            <GhIcon><circle cx="8" cy="8" r="6.500" fill="#3f86e0" stroke="#1a3f80" /><circle cx="6" cy="6" r="3" fill="#cfe2fb" /></GhIcon>
            <span className="w-[7px]">▪</span>
        </div>
        <Canvas />
        <footer className="flex h-[13px] shrink-0 items-center gap-px bg-[#f3f3f3] px-px">
            <svg viewBox="0 0 10 10" className="size-[9px]" aria-hidden="true">
                <circle cx="5" cy="5" r="4.500" fill="#2467b8" stroke="#123f78" />
                <path d="M5 2v3M5 7v1" stroke="#fff" strokeWidth="1.500" />
            </svg>
            <span className="flex-1">Autosave complete (16 seconds ago)</span>
            <span className="pr-2 text-[#888]">1.0.0007</span>
            <svg viewBox="0 0 6 6" className="size-[6px]" aria-hidden="true">
                <path d="M5 0v1M5 2.500v1M5 5v1M3 2.500v1M3 5v1M1 5v1" stroke="#aaa" />
            </svg>
        </footer>
    </div>
);

const APPS = [
    { name: "Start", art: <path d="M1 1h8.500v8.500H1zM10.500 1H19v8.500h-8.500zM1 10.500h8.500V19H1zM10.500 10.500H19V19h-8.500z" fill="#46c3f5" /> },
    { name: "Search", art: <g fill="none" stroke="#f2f2f2" strokeWidth="2"><circle cx="9" cy="9" r="6.500" /><path d="M14 14l5 5" /></g> },
    { name: "Weather", art: <g><path d="M3 17c-4-1-2-6 1-6 1-5 8-6 10-1 5 0 5 7 1 7z" fill="#b7d3f7" /><circle cx="15" cy="4" r="5" fill="#d32f2f" /><path d="M15 1v4M15 6v1" stroke="#fff" strokeWidth="1.300" /></g> },
    { name: "Teams", art: <g><circle cx="14" cy="5" r="3" fill="#7b83eb" /><rect x="9" y="8" width="10" height="9" rx="2" fill="#7b83eb" /><rect x="1" y="5" width="11" height="11" fill="#f1f2fc" /><path d="M3 8h7M6.500 8v6" stroke="#4b53bc" strokeWidth="1.800" /></g> },
    { name: "Remote desktop", art: <g><rect x="1" y="3" width="17" height="12" fill="#1e88d8" /><path d="M6 15h7v3H6z" fill="#49b4f0" /><path d="M10 5h6v8h-6z" fill="#0d5fa8" /></g> },
    { name: "Edge", art: <g><circle cx="10" cy="10" r="9" fill="#1b8fd2" /><path d="M2 8c3-9 17-8 17 2 0 4-7 5-7 1 0-5-8-4-10-3z" fill="#4fd07b" /><path d="M7 10c0 6 6 7 10 5-3 5-13 5-14-3z" fill="#0c5aa6" /></g> },
    { name: "Chrome", art: <g><circle cx="10" cy="10" r="9" fill="#f6c21c" /><path d="M2 6a9 9 0 0 1 16 0h-8z" fill="#e33b2e" /><path d="M2 6a9 9 0 0 0 7 13l3-6z" fill="#2fa24a" /><circle cx="10" cy="10" r="4.500" fill="#fff" /><circle cx="10" cy="10" r="3.300" fill="#3f7fe8" /></g> },
    { name: "GstarCAD", dot: true, art: <g><rect x="1" y="1" width="18" height="18" fill="#f4f7fb" /><path d="M15 4H6v12h9v-5h-5" fill="none" stroke="#2173d8" strokeWidth="3" /><path d="M12 15h5v2h-5z" fill="#e33b2e" /></g> },
    { name: "Explorer", art: <g><path d="M2 7l13-4 3 10-13 4z" fill="#f0f0f0" /><path d="M3 4h11v8H3z" fill="#f3c24a" /><path d="M4 8h12v7H4z" fill="#f8dc86" /><path d="M6 10h8v3H6z" fill="#5eb06a" /></g> },
    { name: "Mail", art: <g><path d="M1 7l9-6 9 6v11H1z" fill="#1f6fc4" /><path d="M3 5h14v6l-7 4-7-4z" fill="#e9f3fd" /><path d="M1 8l9 6 9-6v10H1z" fill="#3fa2ee" /></g> },
    { name: "Thunderbird", art: <g><circle cx="10" cy="10" r="8.500" fill="#2a67c9" /><path d="M2 9l9-3 7 4-7 7-8-4z" fill="#e8eef8" /><path d="M8 2c6-1 10 4 10 9-2-4-5-6-10-5z" fill="#5b96e8" /></g> },
    { name: "Grasshopper", art: <g stroke="#d8d8d8" fill="none" strokeWidth="1.500"><path d="M9 9l6-6M10 10l7-4M10 11h8M10 12l7 4M9 13l6 6" /><path d="M3 11l7-2v5z" fill="#999" /></g> },
    { name: "Rhinoceros", active: true, art: <g><rect width="20" height="20" fill="#111" /><path d="M1 3l5 5 0-5 3 6 5 0 5-6 0 9-4 6-6 1-5-6z" fill="#fff" /><path d="M7 12l4 3 5-4" stroke="#111" fill="none" /></g> },
    { name: "Chrome profile", dot: true, art: <g><circle cx="9" cy="11" r="8.500" fill="#f6c21c" /><path d="M1.500 7a8.500 8.500 0 0 1 15 0H9z" fill="#e33b2e" /><path d="M1.500 7a8.500 8.500 0 0 0 6 12.500l4-6z" fill="#2fa24a" /><circle cx="9" cy="11" r="4" fill="#fff" /><circle cx="9" cy="11" r="3" fill="#3f7fe8" /><circle cx="15" cy="5" r="5" fill="#17857a" /><path d="M13 3v2c0 3 4 3 4 0V3" stroke="#fff" fill="none" /></g> },
];

const Taskbar = () => (
    <div className="z-10 flex h-[25px] shrink-0 items-center justify-between bg-[#1f2122] pr-[10px] pl-[9px] text-white">
        <div className="flex w-[323px] items-center justify-between">
            {APPS.map(({ name, art, dot, active }) => (
                <button key={name} type="button" aria-label={name} className={`relative flex h-[21px] w-4 items-center justify-center rounded-sm ${active ? "bg-[#333536]" : ""}`}>
                    <svg viewBox="0 0 20 20" className="size-[14px]" aria-hidden="true">{art}</svg>
                    {dot && <span className="absolute bottom-0 h-px w-[2px] bg-[#aaa]" />}
                    {active && <span className="absolute bottom-0 h-px w-2 bg-[#4cb8f5]" />}
                </button>
            ))}
        </div>
        <div className="flex items-center gap-1">
            <svg viewBox="0 0 8 5" className="mr-1 h-[5px] w-[7px]" aria-hidden="true">
                <path d="M1 4l3-3 3 3" fill="none" stroke="#eee" />
            </svg>
            <svg viewBox="0 0 10 10" className="size-[9px]" aria-hidden="true">
                <path d="M1 1h6M1 1v6h7V4M3 9h4M7 0v3h3V0z" fill="none" stroke="#eee" />
            </svg>
            <svg viewBox="0 0 10 10" className="size-[9px]" aria-hidden="true">
                <path d="M1 4h2l2-2v6L3 6H1zM6.500 3.500c1 1 1 2 0 3M8 2c2 2 2 4 0 6" fill="none" stroke="#eee" strokeWidth=".9" />
            </svg>
            <div className="pl-1 text-right text-[7px] leading-2">
                <p>14:43</p>
                <p>8.12.2023</p>
            </div>
            <svg viewBox="0 0 10 10" className="size-[9px]" aria-hidden="true">
                <path d="M1 8l1-2V4c0-4 6-4 6 0v2l1 2zM4 9h2" fill="#38a9f0" stroke="#38a9f0" strokeWidth=".8" />
            </svg>
        </div>
    </div>
);

export default function App() {
    return (
        <div className="relative flex h-screen flex-col overflow-hidden bg-[#1f2122] font-['Roboto','Open_Sans',sans-serif]">
            <RhinoWindow />
            <GrasshopperWindow />
            <Taskbar />
        </div>
    );
}
